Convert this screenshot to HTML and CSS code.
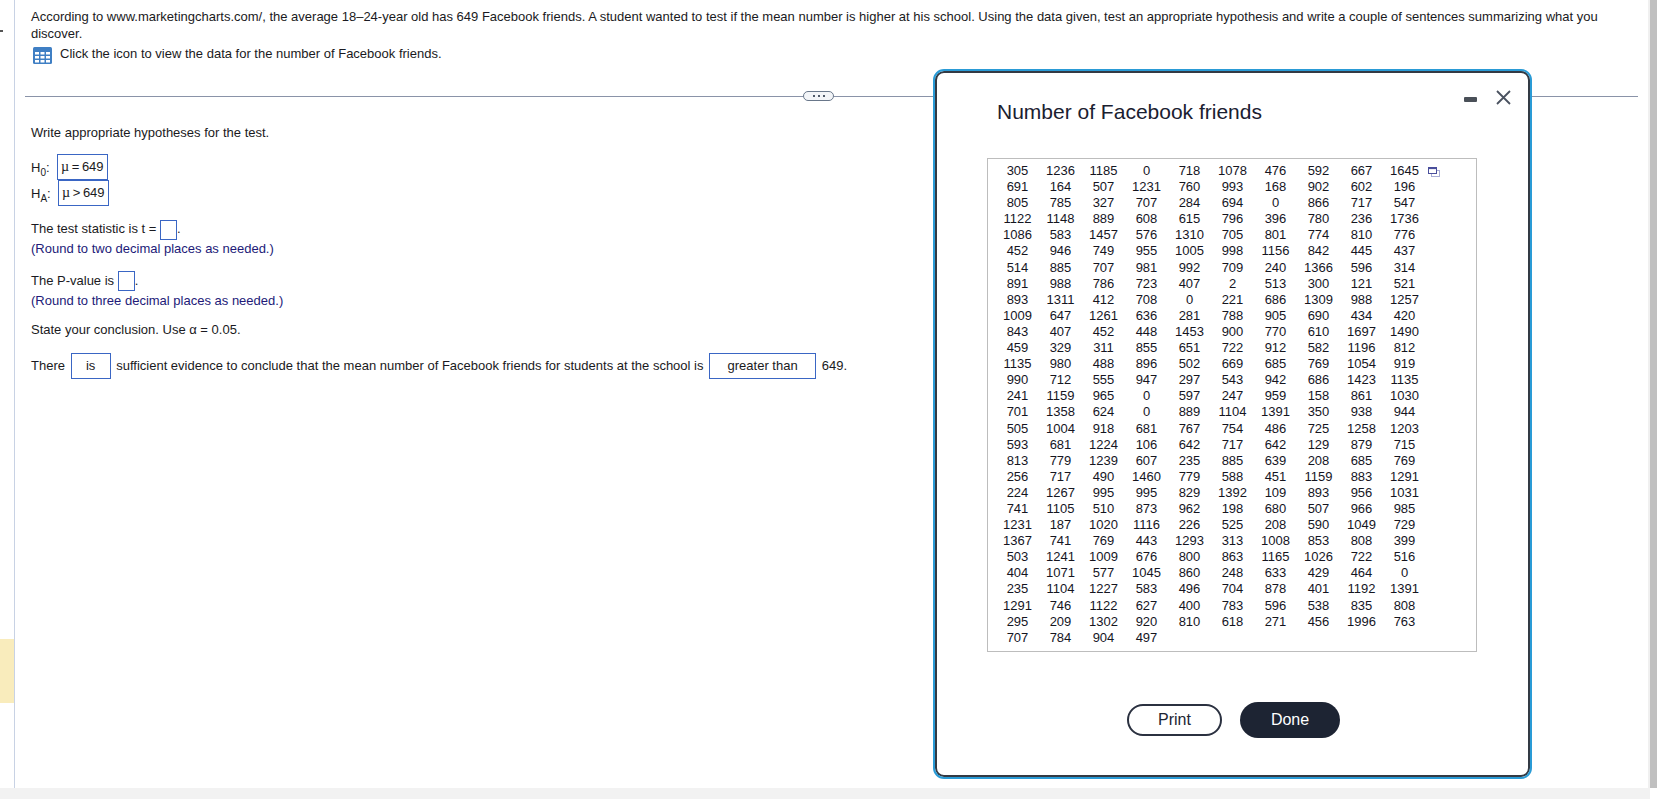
FILE: index.html
```html
<!DOCTYPE html>
<html lang="en">
<head>
<meta charset="utf-8">
<title>Number of Facebook friends</title>
<link rel="stylesheet" href="styles.css">
</head>
<body>
<div class="page">
  <div class="main">
    <aside class="rail"><div class="tick"></div><div class="marker"></div></aside>
    <main class="content">
      <p class="question">According to www.marketingcharts.com/, the average 18–24-year old has 649 Facebook friends. A student wanted to test if the mean number is higher at his school. Using the data given, test an appropriate hypothesis and write a couple of sentences summarizing what you discover.</p>
      <p class="data-link">
        <svg class="grid-icon" viewBox="0 0 19 17" width="19" height="17" aria-hidden="true">
          <rect x="0" y="0" width="19" height="17" rx="1.5" fill="#3f7fc4"/>
          <g fill="#ffffff">
            <rect x="2" y="5" width="4" height="2.5"/><rect x="7.5" y="5" width="4" height="2.5"/><rect x="13" y="5" width="4" height="2.5"/>
            <rect x="2" y="9" width="4" height="2.5"/><rect x="7.5" y="9" width="4" height="2.5"/><rect x="13" y="9" width="4" height="2.5"/>
            <rect x="2" y="13" width="4" height="2.5"/><rect x="7.5" y="13" width="4" height="2.5"/><rect x="13" y="13" width="4" height="2.5"/>
          </g>
        </svg>
        <span>Click the icon to view the data for the number of Facebook friends.</span>
      </p>
      <div class="divider"><span class="line line-left"></span><span class="more"><i></i><i></i><i></i></span><span class="line"></span></div>
      <p class="prompt">Write appropriate hypotheses for the test.</p>
      <div class="hyp hyp-first"><span class="hyp-label">H<sub>0</sub>:</span><span class="box hyp-box"><span class="mu">µ</span> = 649</span></div>
      <div class="hyp hyp-second"><span class="hyp-label">H<sub>A</sub>:</span><span class="box hyp-box"><span class="mu">µ</span> &gt; 649</span></div>
      <p class="answer answer-t">The test statistic is t = <span class="box blank"></span>.</p>
      <p class="hint hint-t">(Round to two decimal places as needed.)</p>
      <p class="answer answer-p">The P-value is <span class="box blank"></span>.</p>
      <p class="hint hint-p">(Round to three decimal places as needed.)</p>
      <p class="state">State your conclusion. Use α = 0.05.</p>
      <p class="conclusion">There <span class="box choice choice-is">is</span> sufficient evidence to conclude that the mean number of Facebook friends for students at the school is <span class="box choice choice-gt">greater than</span> 649.</p>
    </main>
    <div class="scrollbar"></div>
  </div>
  <div class="footer"></div>
</div>

<section class="dialog">
  <header class="dialog-head">
    <h1 class="dialog-title">Number of Facebook friends</h1>
    <div class="dialog-controls">
      <span class="minimize"></span>
      <svg class="close" viewBox="0 0 15 15" width="15" height="15" aria-hidden="true"><path d="M1 1 L14 14 M14 1 L1 14" stroke="#4a5260" stroke-width="1.8" fill="none"/></svg>
    </div>
  </header>
  <div class="data-box">
    <svg class="copy-icon" viewBox="0 0 12 10" width="12" height="10" aria-hidden="true">
      <rect x="3.5" y="3.5" width="8" height="6" fill="#fff" stroke="#a9aed6"/>
      <rect x="0.5" y="0.5" width="8" height="6" fill="#fff" stroke="#4a4f9c"/>
      <rect x="0.5" y="0.5" width="8" height="1.6" fill="#4a4f9c"/>
    </svg>
    <div class="data-grid">
      <span>305</span><span>1236</span><span>1185</span><span>0</span><span>718</span><span>1078</span><span>476</span><span>592</span><span>667</span><span>1645</span>
      <span>691</span><span>164</span><span>507</span><span>1231</span><span>760</span><span>993</span><span>168</span><span>902</span><span>602</span><span>196</span>
      <span>805</span><span>785</span><span>327</span><span>707</span><span>284</span><span>694</span><span>0</span><span>866</span><span>717</span><span>547</span>
      <span>1122</span><span>1148</span><span>889</span><span>608</span><span>615</span><span>796</span><span>396</span><span>780</span><span>236</span><span>1736</span>
      <span>1086</span><span>583</span><span>1457</span><span>576</span><span>1310</span><span>705</span><span>801</span><span>774</span><span>810</span><span>776</span>
      <span>452</span><span>946</span><span>749</span><span>955</span><span>1005</span><span>998</span><span>1156</span><span>842</span><span>445</span><span>437</span>
      <span>514</span><span>885</span><span>707</span><span>981</span><span>992</span><span>709</span><span>240</span><span>1366</span><span>596</span><span>314</span>
      <span>891</span><span>988</span><span>786</span><span>723</span><span>407</span><span>2</span><span>513</span><span>300</span><span>121</span><span>521</span>
      <span>893</span><span>1311</span><span>412</span><span>708</span><span>0</span><span>221</span><span>686</span><span>1309</span><span>988</span><span>1257</span>
      <span>1009</span><span>647</span><span>1261</span><span>636</span><span>281</span><span>788</span><span>905</span><span>690</span><span>434</span><span>420</span>
      <span>843</span><span>407</span><span>452</span><span>448</span><span>1453</span><span>900</span><span>770</span><span>610</span><span>1697</span><span>1490</span>
      <span>459</span><span>329</span><span>311</span><span>855</span><span>651</span><span>722</span><span>912</span><span>582</span><span>1196</span><span>812</span>
      <span>1135</span><span>980</span><span>488</span><span>896</span><span>502</span><span>669</span><span>685</span><span>769</span><span>1054</span><span>919</span>
      <span>990</span><span>712</span><span>555</span><span>947</span><span>297</span><span>543</span><span>942</span><span>686</span><span>1423</span><span>1135</span>
      <span>241</span><span>1159</span><span>965</span><span>0</span><span>597</span><span>247</span><span>959</span><span>158</span><span>861</span><span>1030</span>
      <span>701</span><span>1358</span><span>624</span><span>0</span><span>889</span><span>1104</span><span>1391</span><span>350</span><span>938</span><span>944</span>
      <span>505</span><span>1004</span><span>918</span><span>681</span><span>767</span><span>754</span><span>486</span><span>725</span><span>1258</span><span>1203</span>
      <span>593</span><span>681</span><span>1224</span><span>106</span><span>642</span><span>717</span><span>642</span><span>129</span><span>879</span><span>715</span>
      <span>813</span><span>779</span><span>1239</span><span>607</span><span>235</span><span>885</span><span>639</span><span>208</span><span>685</span><span>769</span>
      <span>256</span><span>717</span><span>490</span><span>1460</span><span>779</span><span>588</span><span>451</span><span>1159</span><span>883</span><span>1291</span>
      <span>224</span><span>1267</span><span>995</span><span>995</span><span>829</span><span>1392</span><span>109</span><span>893</span><span>956</span><span>1031</span>
      <span>741</span><span>1105</span><span>510</span><span>873</span><span>962</span><span>198</span><span>680</span><span>507</span><span>966</span><span>985</span>
      <span>1231</span><span>187</span><span>1020</span><span>1116</span><span>226</span><span>525</span><span>208</span><span>590</span><span>1049</span><span>729</span>
      <span>1367</span><span>741</span><span>769</span><span>443</span><span>1293</span><span>313</span><span>1008</span><span>853</span><span>808</span><span>399</span>
      <span>503</span><span>1241</span><span>1009</span><span>676</span><span>800</span><span>863</span><span>1165</span><span>1026</span><span>722</span><span>516</span>
      <span>404</span><span>1071</span><span>577</span><span>1045</span><span>860</span><span>248</span><span>633</span><span>429</span><span>464</span><span>0</span>
      <span>235</span><span>1104</span><span>1227</span><span>583</span><span>496</span><span>704</span><span>878</span><span>401</span><span>1192</span><span>1391</span>
      <span>1291</span><span>746</span><span>1122</span><span>627</span><span>400</span><span>783</span><span>596</span><span>538</span><span>835</span><span>808</span>
      <span>295</span><span>209</span><span>1302</span><span>920</span><span>810</span><span>618</span><span>271</span><span>456</span><span>1996</span><span>763</span>
      <span>707</span><span>784</span><span>904</span><span>497</span>
    </div>
  </div>
  <div class="dialog-actions">
    <button class="btn btn-print" type="button">Print</button>
    <button class="btn btn-done" type="button">Done</button>
  </div>
</section>
</body>
</html>
```
FILE: styles.css
```css
* { box-sizing: border-box; }
html, body { margin: 0; padding: 0; height: 100%; overflow: hidden; }
body {
  position: relative;
  width: 1657px;
  height: 799px;
  background: #fff;
  font-family: "Liberation Sans", Arial, sans-serif;
  font-size: 13px;
  line-height: 17px;
  color: #1a1a22;
}
p { margin: 0; }

.page { display: flex; flex-direction: column; height: 799px; }
.main { display: flex; height: 788px; }
.footer { height: 11px; background: #f2f2f2; margin-right: 7px; }

.rail {
  width: 15px;
  flex: none;
  border-right: 1px solid #c8d2e4;
  display: flex;
  flex-direction: column;
}
.tick { width: 3px; height: 2px; margin-top: 30px; background: #555; }
.marker { height: 64px; margin-top: 607px; background: #f9ecbc; }

.content { flex: 1; min-width: 0; padding: 8px 10px 0 16px; }
.scrollbar { width: 9px; flex: none; background: #c0c0c0; border-left: 2px solid #f0f0f0; }

.question { padding-right: 30px; }
.data-link { display: flex; align-items: flex-start; gap: 8px; margin-top: 3px; margin-left: 2px; }
.grid-icon { display: block; flex: none; margin-top: 2px; }

.divider { display: flex; align-items: center; margin: 26px 0 0 -6px; height: 12px; }
.line { flex: 1; height: 1px; background: #8a93a8; }
.line-left { flex: none; width: 778px; }
.more {
  flex: none;
  width: 31px;
  height: 10px;
  border: 1px solid #69778a;
  border-radius: 5px;
  background: #f3f5f8;
  display: flex;
  align-items: center;
  justify-content: center;
  gap: 3px;
}
.more i { width: 2px; height: 2px; background: #4f5a6a; }

.prompt { margin-top: 22px; }

.hyp { display: flex; align-items: center; height: 26px; }
.hyp-first { margin-top: 13px; }
.hyp-label { width: 26px; flex: none; }
.hyp-second .hyp-label { width: 27px; }
.hyp sub { font-size: 10px; line-height: 0; }
.box { border: 1px solid #3a66c4; background: #fff; }
.hyp-box { display: block; width: 51px; height: 26px; line-height: 24px; padding-left: 3px; white-space: nowrap; word-spacing: -1px; }
.mu { font-family: "Liberation Serif", serif; font-size: 14px; }

.blank { display: inline-block; width: 17px; height: 20px; vertical-align: middle; margin: -2px 0; }
.answer-t { margin-top: 14px; }
.answer-p { margin-top: 15px; }
.hint { color: #221a78; }
.hint-t { margin-top: 2px; }
.hint-p { margin-top: 3px; }
.state { margin-top: 12px; }

.conclusion { margin-top: 15px; line-height: 26px; white-space: nowrap; }
.choice { display: inline-block; height: 26px; line-height: 24px; text-align: center; vertical-align: top; }
.choice-is { width: 40px; margin: 0 2px; }
.choice-gt { width: 107px; margin: 0 2px; }

/* Floating data window */
.dialog {
  position: absolute;
  left: 933px;
  top: 69px;
  width: 599px;
  height: 710px;
  border: 2px solid #2a9bd6;
  border-radius: 11px;
  background: #fff;
  box-shadow: inset 0 0 0 2px #333a44;
  padding: 4px 50px 0 52px;
  display: flex;
  flex-direction: column;
}
.dialog-head { position: relative; height: 83px; }
.dialog-title { margin: 25px 0 0 10px; font-size: 21px; line-height: 24px; font-weight: 400; color: #1a2030; }
.dialog-controls { position: absolute; top: 15px; right: -31px; display: flex; align-items: center; gap: 19px; }
.minimize { width: 13px; height: 5px; margin-top: 4px; border-radius: 1px; background: #4a5058; }
.close { display: block; }

.data-box {
  position: relative;
  width: 490px;
  height: 494px;
  flex: none;
  border: 1px solid #bdbdbd;
  padding: 4px 0 0 8px;
}
.data-grid {
  display: grid;
  grid-template-columns: repeat(10, 43px);
  grid-auto-rows: 16.1px;
  line-height: 16px;
  text-align: center;
  color: #15151f;
}
.copy-icon { position: absolute; left: 440px; top: 8px; }

.dialog-actions { display: flex; justify-content: center; align-items: center; gap: 18px; margin-top: 50px; }
.btn {
  font-family: "Liberation Sans", Arial, sans-serif;
  font-size: 16px;
  border-radius: 18px;
  padding: 0;
  cursor: pointer;
}
.btn-print { width: 95px; height: 32px; background: #fff; color: #1d2433; border: 2px solid #2b3140; }
.btn-done { width: 100px; height: 36px; background: #1d2433; color: #fff; border: 0; }
```
